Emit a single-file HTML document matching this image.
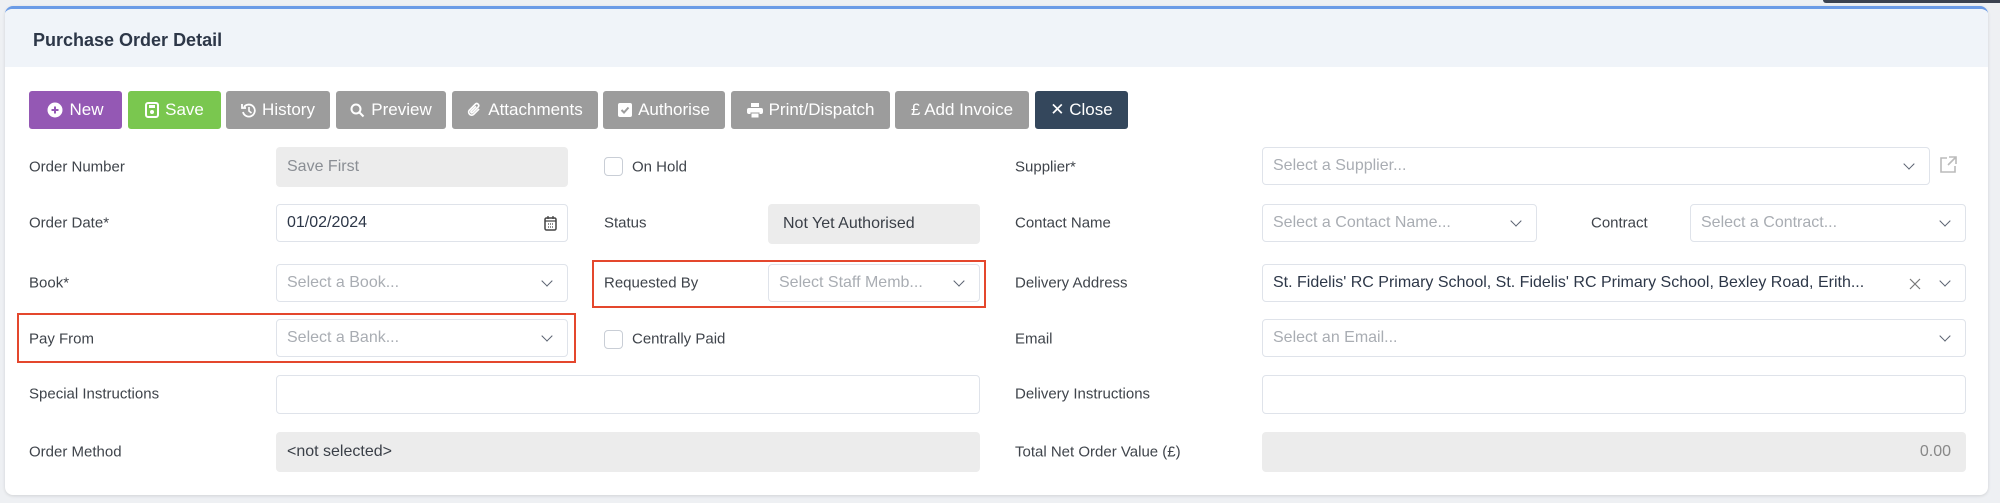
<!DOCTYPE html>
<html><head><meta charset="utf-8"><style>
*{box-sizing:border-box;margin:0;padding:0}
body{width:2000px;height:503px;background:#eef0f3;font-family:"Liberation Sans",sans-serif;position:relative;overflow:hidden;color:#3a3f47}
.card{position:absolute;left:5px;top:6px;width:1983px;height:489px;background:#fff;border-radius:8px;border-top:3px solid #6b9be6;box-shadow:0 1px 3px rgba(0,0,0,.12);overflow:hidden}
.hdr{position:absolute;left:0;top:0;right:0;height:58px;background:#f0f4f9}
.title{position:absolute;left:28px;top:21px;font-size:18px;font-weight:bold;color:#2d3748}
.a{position:absolute}
.btn{position:absolute;top:91px;height:38px;border-radius:3px;color:#fff;font-size:17px;display:flex;align-items:center;justify-content:center;gap:6px}
.g{background:#9c9c9c}
.lbl{position:absolute;font-size:15px;color:#3f444b;transform:translateY(-50%)}
.in{position:absolute;border:1px solid #dfe3ea;border-radius:4px;background:#fff;font-size:16px;display:flex;align-items:center;padding-left:10px;color:#a9adb3}
.dis{background:#ececec;border-color:#ececec;color:#555}
.chev{position:absolute;right:16px;top:50%;width:8px;height:8px;border-right:1.3px solid #5a6270;border-bottom:1.3px solid #5a6270;transform:translateY(-75%) rotate(45deg)}
.cb{position:absolute;width:19px;height:19px;border:1px solid #c9ced6;border-radius:4px;background:#fff}
.red{position:absolute;border:2px solid #e4472d}
</style></head><body>
<div class="a" style="left:1823px;top:0;width:177px;height:3px;background:#3b4250;border-radius:0 0 0 4px"></div>
<div class="card">
<div class="hdr"></div>
<div class="title">Purchase Order Detail</div>
</div>
<div class="btn" style="left:29px;width:93px;background:#9458b4"><svg width="16" height="16"><circle cx="8" cy="8" r="7.5" fill="#fff"/><path d="M8 4.5v7M4.5 8h7" stroke="#9458b4" stroke-width="2"/></svg>New</div>
<div class="btn" style="left:128px;width:93px;background:#7ac74f"><svg width="14" height="16"><rect x="1" y="1" width="12" height="14" rx="2" fill="none" stroke="#fff" stroke-width="2"/><rect x="4" y="3" width="6" height="3" fill="#fff"/><circle cx="7" cy="10" r="2" fill="#fff"/></svg>Save</div>
<div class="btn g" style="left:226px;width:104px"><svg width="15" height="15"><path d="M3 4A6 6 0 1 1 2 9" fill="none" stroke="#fff" stroke-width="1.8"/><path d="M1 1v4h4" fill="none" stroke="#fff" stroke-width="1.8"/><path d="M8 4v4l2.5 2" fill="none" stroke="#fff" stroke-width="1.6"/></svg>History</div>
<div class="btn g" style="left:336px;width:110px"><svg width="15" height="15"><circle cx="6" cy="6" r="4.5" fill="none" stroke="#fff" stroke-width="2"/><path d="M9.5 9.5l4 4" stroke="#fff" stroke-width="2"/></svg>Preview</div>
<div class="btn g" style="left:452px;width:146px"><svg width="15" height="16"><path d="M12 7l-5.5 5.5a3 3 0 0 1-4.2-4.2L8.5 2a2 2 0 0 1 2.8 2.8L5.5 10.6a1 1 0 0 1-1.4-1.4L9 4.3" fill="none" stroke="#fff" stroke-width="1.7"/></svg>Attachments</div>
<div class="btn g" style="left:603px;width:122px"><svg width="14" height="14"><rect width="14" height="14" rx="2" fill="#fff"/><path d="M3.5 7l2.5 2.5 4.5-5" stroke="#9c9c9c" stroke-width="2" fill="none"/></svg>Authorise</div>
<div class="btn g" style="left:731px;width:159px"><svg width="16" height="15"><rect x="4" y="0" width="8" height="4" fill="#fff"/><rect x="0" y="5" width="16" height="6" rx="2" fill="#fff"/><rect x="4" y="10" width="8" height="5" fill="#fff" stroke="#9c9c9c"/></svg>Print/Dispatch</div>
<div class="btn g" style="left:895px;width:134px">£ Add Invoice</div>
<div class="btn" style="left:1035px;width:93px;background:#34475c">✕ Close</div>

<div class="lbl" style="left:29px;top:167px">Order Number</div>
<div class="lbl" style="left:29px;top:223px">Order Date*</div>
<div class="lbl" style="left:29px;top:283px">Book*</div>
<div class="lbl" style="left:29px;top:339px">Pay From</div>
<div class="lbl" style="left:29px;top:394px">Special Instructions</div>
<div class="lbl" style="left:29px;top:452px">Order Method</div>

<div class="in dis" style="left:276px;top:147px;width:292px;height:40px;color:#8a8e94">Save First</div>
<div class="in" style="left:276px;top:204px;width:292px;height:38px;color:#2d3748">01/02/2024<svg class="a" style="right:10px;top:11px" width="13" height="15"><rect x="1" y="2" width="11" height="12" rx="1.5" fill="none" stroke="#444" stroke-width="1.5"/><path d="M4 0v3M9 0v3M1 5h11M4 8h1M6 8h1M8 8h1M4 11h1M6 11h1M8 11h1" stroke="#444" stroke-width="1.3"/></svg></div>
<div class="in" style="left:276px;top:264px;width:292px;height:38px">Select a Book...<span class="chev"></span></div>
<div class="in" style="left:276px;top:319px;width:292px;height:38px">Select a Bank...<span class="chev"></span></div>
<div class="in" style="left:276px;top:375px;width:704px;height:39px"></div>
<div class="in dis" style="left:276px;top:432px;width:704px;height:40px;color:#3a3f47">&lt;not selected&gt;</div>

<div class="cb" style="left:604px;top:157px"></div>
<div class="lbl" style="left:632px;top:167px">On Hold</div>
<div class="lbl" style="left:604px;top:223px">Status</div>
<div class="in dis" style="left:768px;top:204px;width:212px;height:40px;color:#3a3f47;padding-left:14px">Not Yet Authorised</div>
<div class="lbl" style="left:604px;top:283px">Requested By</div>
<div class="in" style="left:768px;top:264px;width:212px;height:38px">Select Staff Memb...<span class="chev"></span></div>
<div class="cb" style="left:604px;top:330px"></div>
<div class="lbl" style="left:632px;top:339px">Centrally Paid</div>

<div class="red" style="left:592px;top:260px;width:394px;height:48px"></div>
<div class="red" style="left:17px;top:313px;width:559px;height:50px"></div>

<div class="lbl" style="left:1015px;top:167px">Supplier*</div>
<div class="lbl" style="left:1015px;top:223px">Contact Name</div>
<div class="lbl" style="left:1591px;top:223px">Contract</div>
<div class="lbl" style="left:1015px;top:283px">Delivery Address</div>
<div class="lbl" style="left:1015px;top:339px">Email</div>
<div class="lbl" style="left:1015px;top:394px">Delivery Instructions</div>
<div class="lbl" style="left:1015px;top:452px">Total Net Order Value (£)</div>

<div class="in" style="left:1262px;top:147px;width:668px;height:38px">Select a Supplier...<span class="chev"></span></div>
<svg class="a" style="left:1939px;top:156px" width="18" height="18"><path d="M8 2H2v14h14v-6" fill="none" stroke="#bbb" stroke-width="1.6"/><path d="M10 1h7v7M17 1l-8 8" fill="none" stroke="#bbb" stroke-width="1.6"/></svg>
<div class="in" style="left:1262px;top:204px;width:275px;height:38px">Select a Contact Name...<span class="chev"></span></div>
<div class="in" style="left:1690px;top:204px;width:276px;height:38px">Select a Contract...<span class="chev"></span></div>
<div class="in" style="left:1262px;top:264px;width:704px;height:38px;color:#2d3748">St. Fidelis' RC Primary School, St. Fidelis' RC Primary School, Bexley Road, Erith...<svg class="a" style="right:44px;top:13px" width="12" height="12"><path d="M1 1l10 10M11 1L1 11" stroke="#777" stroke-width="1.2"/></svg><span class="chev"></span></div>
<div class="in" style="left:1262px;top:319px;width:704px;height:38px">Select an Email...<span class="chev"></span></div>
<div class="in" style="left:1262px;top:375px;width:704px;height:39px"></div>
<div class="in dis" style="left:1262px;top:432px;width:704px;height:40px;justify-content:flex-end;padding-right:14px;color:#888">0.00</div>
</body></html>
